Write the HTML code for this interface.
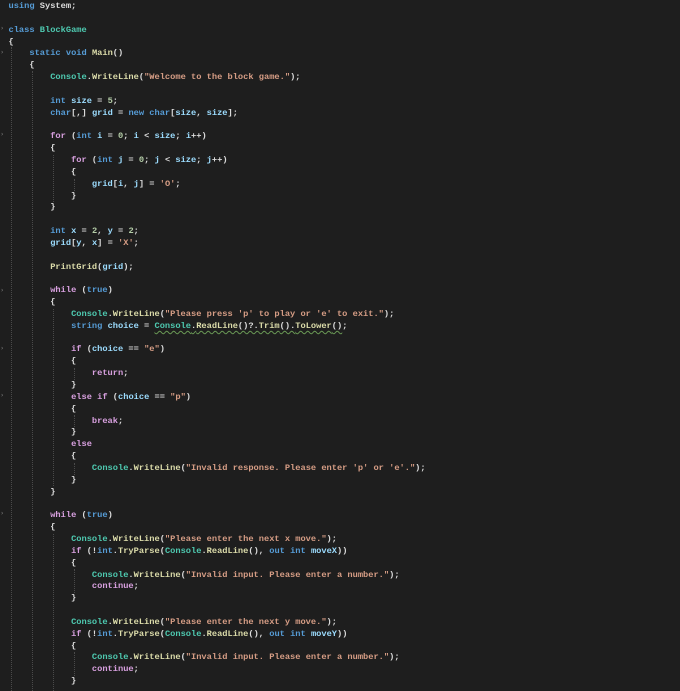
<!DOCTYPE html>
<html><head><meta charset="utf-8"><style>
html,body{margin:0;padding:0;background:#1e1e1e;width:680px;height:691px;overflow:hidden;position:relative}
pre{position:absolute;left:8.5px;top:1px;margin:0;font-family:"Liberation Mono",monospace;font-size:8.7px;line-height:11.84px;font-weight:bold;color:#dcdcdc;z-index:2}
.k{color:#569cd6}.c{color:#d8a0df}.t{color:#4ec9b0}.m{color:#dcdcaa}.s{color:#d69d85}.v{color:#9cdcfe}.n{color:#b5cea8}
.sq{text-decoration:underline wavy #6a9955;text-decoration-thickness:1px;text-underline-offset:2px}
.g{position:absolute;width:0;border-left:1px dotted #4a4a4a;z-index:1}
.f{position:absolute;left:1px;color:#888;font-family:"DejaVu Sans",sans-serif;font-size:6px;line-height:6px}
</style></head><body>
<div class="g" style="left:11px;top:47px;height:646px"></div>
<div class="g" style="left:32px;top:71px;height:622px"></div>
<div class="g" style="left:53px;top:155px;height:47px"></div>
<div class="g" style="left:53px;top:309px;height:177px"></div>
<div class="g" style="left:53px;top:534px;height:159px"></div>
<div class="g" style="left:74px;top:179px;height:12px"></div>
<div class="g" style="left:74px;top:368px;height:12px"></div>
<div class="g" style="left:74px;top:415px;height:12px"></div>
<div class="g" style="left:74px;top:463px;height:12px"></div>
<div class="g" style="left:74px;top:569px;height:24px"></div>
<div class="g" style="left:74px;top:652px;height:24px"></div>
<div class="f" style="top:26px">›</div>
<div class="f" style="top:50px">›</div>
<div class="f" style="top:132px">›</div>
<div class="f" style="top:288px">›</div>
<div class="f" style="top:346px">›</div>
<div class="f" style="top:393px">›</div>
<div class="f" style="top:511px">›</div>
<pre><span class="k">using</span> System;

<span class="k">class</span> <span class="t">BlockGame</span>
{
    <span class="k">static</span> <span class="k">void</span> <span class="m">Main</span>()
    {
        <span class="t">Console</span>.<span class="m">WriteLine</span>(<span class="s">"Welcome to the block game."</span>);

        <span class="k">int</span> <span class="v">size</span> = <span class="n">5</span>;
        <span class="k">char</span>[,] <span class="v">grid</span> = <span class="k">new</span> <span class="k">char</span>[<span class="v">size</span>, <span class="v">size</span>];

        <span class="c">for</span> (<span class="k">int</span> <span class="v">i</span> = <span class="n">0</span>; <span class="v">i</span> &lt; <span class="v">size</span>; <span class="v">i</span>++)
        {
            <span class="c">for</span> (<span class="k">int</span> <span class="v">j</span> = <span class="n">0</span>; <span class="v">j</span> &lt; <span class="v">size</span>; <span class="v">j</span>++)
            {
                <span class="v">grid</span>[<span class="v">i</span>, <span class="v">j</span>] = <span class="s">'O'</span>;
            }
        }

        <span class="k">int</span> <span class="v">x</span> = <span class="n">2</span>, <span class="v">y</span> = <span class="n">2</span>;
        <span class="v">grid</span>[<span class="v">y</span>, <span class="v">x</span>] = <span class="s">'X'</span>;

        <span class="m">PrintGrid</span>(<span class="v">grid</span>);

        <span class="c">while</span> (<span class="k">true</span>)
        {
            <span class="t">Console</span>.<span class="m">WriteLine</span>(<span class="s">"Please press 'p' to play or 'e' to exit."</span>);
            <span class="k">string</span> <span class="v">choice</span> = <span class="sq"><span class="t">Console</span>.<span class="m">ReadLine</span>()?.<span class="m">Trim</span>().<span class="m">ToLower</span>()</span>;

            <span class="c">if</span> (<span class="v">choice</span> == <span class="s">"e"</span>)
            {
                <span class="c">return</span>;
            }
            <span class="c">else</span> <span class="c">if</span> (<span class="v">choice</span> == <span class="s">"p"</span>)
            {
                <span class="c">break</span>;
            }
            <span class="c">else</span>
            {
                <span class="t">Console</span>.<span class="m">WriteLine</span>(<span class="s">"Invalid response. Please enter 'p' or 'e'."</span>);
            }
        }

        <span class="c">while</span> (<span class="k">true</span>)
        {
            <span class="t">Console</span>.<span class="m">WriteLine</span>(<span class="s">"Please enter the next x move."</span>);
            <span class="c">if</span> (!<span class="k">int</span>.<span class="m">TryParse</span>(<span class="t">Console</span>.<span class="m">ReadLine</span>(), <span class="k">out</span> <span class="k">int</span> <span class="v">moveX</span>))
            {
                <span class="t">Console</span>.<span class="m">WriteLine</span>(<span class="s">"Invalid input. Please enter a number."</span>);
                <span class="c">continue</span>;
            }

            <span class="t">Console</span>.<span class="m">WriteLine</span>(<span class="s">"Please enter the next y move."</span>);
            <span class="c">if</span> (!<span class="k">int</span>.<span class="m">TryParse</span>(<span class="t">Console</span>.<span class="m">ReadLine</span>(), <span class="k">out</span> <span class="k">int</span> <span class="v">moveY</span>))
            {
                <span class="t">Console</span>.<span class="m">WriteLine</span>(<span class="s">"Invalid input. Please enter a number."</span>);
                <span class="c">continue</span>;
            }
</pre>
</body></html>
